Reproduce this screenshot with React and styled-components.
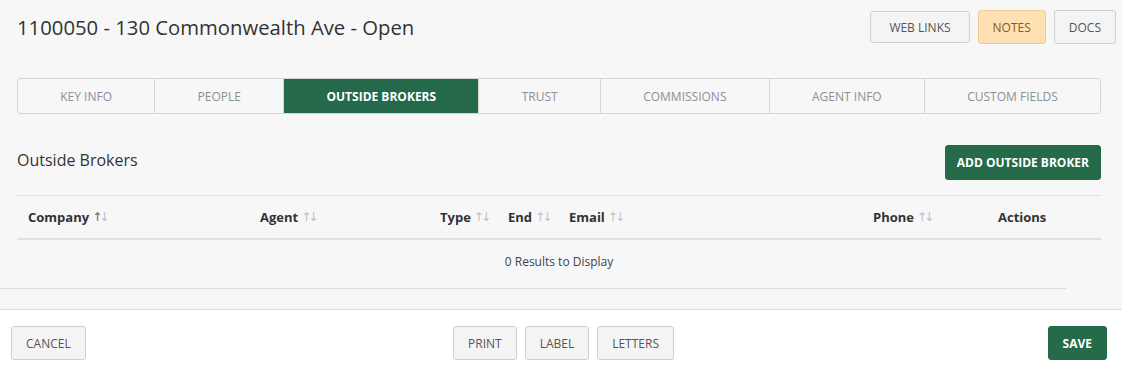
import React from 'react';
import styled, { createGlobalStyle } from 'styled-components';

const GlobalStyle = createGlobalStyle`
  body {
    margin: 0;
    background: #f7f7f7;
    font-family: "Open Sans", "Noto Sans", sans-serif;
    color: #333;
  }
`

const Page = styled.div`
  display: flex;
  flex-direction: column;
  height: 372px;
  overflow: hidden;
`

const Main = styled.div`
  flex: 1;
  padding: 10px 21px 0 17px;
`

const Header = styled.div`
  display: flex;
  align-items: center;
  justify-content: space-between;
  margin-right: -15px;
`

const Title = styled.h1`
  margin: 0;
  font-size: 20.3px;
  font-weight: 400;
  color: #333;
`

const Actions = styled.div`
  display: flex;
  gap: 8px;
  align-items: center;
`

const Button = styled.button`
  height: ${p => p.$tall ? 34 : 32}px;
  padding: 0 ${p => p.$pad || 14}px;
  font-family: inherit;
  font-size: 12px;
  text-transform: uppercase;
  border-radius: 3px;
  border: 1px solid ${p => p.$variant === 'primary' ? '#23694a' : p.$variant === 'warn' ? '#efcb93' : '#cfcfcf'};
  background: ${p => p.$variant === 'primary' ? '#256b4a' : p.$variant === 'warn' ? '#ffe0b2' : '#f4f4f4'};
  color: ${p => p.$variant === 'primary' ? '#fff' : p.$variant === 'warn' ? '#8a5a1a' : '#555'};
  font-weight: ${p => p.$variant === 'primary' ? 700 : 400};
  cursor: pointer;
`

const Tabs = styled.div`
  display: flex;
  margin-top: 34px;
  height: 36px;
  border: 1px solid #d6d6d6;
  border-radius: 3px;
  overflow: hidden;
  box-sizing: border-box;
`

const Tab = styled.div`
  flex: 1 1 auto;
  display: flex;
  align-items: center;
  justify-content: center;
  font-size: 12px;
  text-transform: uppercase;
  color: ${p => p.$active ? '#fff' : '#8b9096'};
  font-weight: ${p => p.$active ? 700 : 400};
  background: ${p => p.$active ? '#23694a' : 'transparent'};
  & + & {
    border-left: 1px solid #d6d6d6;
  }
`

const SectionHead = styled.div`
  display: flex;
  justify-content: space-between;
  align-items: flex-start;
  margin-top: 31px;
`

const SectionTitle = styled.h2`
  margin: 4px 0 0;
  font-size: 16px;
  font-weight: 400;
  color: #333;
`

const Table = styled.div`
  margin-top: 15px;
  border-top: 1px solid #e2e2e2;
`

const HeadRow = styled.div`
  display: grid;
  grid-template-columns: 232px 180px 68px 61px 304px 125px 1fr;
  height: 42px;
  align-items: center;
  padding-left: 11px;
  border-bottom: 2px solid #dee1e6;
`

const HeadCell = styled.div`
  font-size: 13px;
  font-weight: 700;
  color: #333;
  display: flex;
  align-items: center;
  gap: 3px;
`

const SortIcon = styled.span`
  font-family: "DejaVu Sans", sans-serif;
  font-size: 12px;
  font-weight: 400;
  letter-spacing: -3px;
  color: #bcc0c6;
  span:first-child {
    color: ${p => p.$active ? '#666' : '#bcc0c6'};
  }
`

const EmptyRow = styled.div`
  height: 42px;
  display: flex;
  align-items: center;
  justify-content: center;
  background: #f6f7f9;
  font-size: 12px;
  color: #444;
`

const Divider = styled.div`
  width: 1066px;
  margin-top: 6px;
  margin-left: -17px;
  border-top: 1px solid #dcdcdc;
`

const Footer = styled.div`
  display: grid;
  grid-template-columns: 1fr auto 1fr;
  align-items: center;
  padding: 16px 15px 12px 11px;
  background: #fff;
  border-top: 1px solid #dcdcdc;
`

const Group = styled.div`
  display: flex;
  gap: 8px;
  justify-content: ${p => p.$align || 'flex-start'};
  margin-left: ${p => p.$shift || 0}px;
`

const tabs = ['Key Info', 'People', 'Outside Brokers', 'Trust', 'Commissions', 'Agent Info', 'Custom Fields'];

const columns = [
  { label: 'Company', sort: true, active: true },
  { label: 'Agent', sort: true },
  { label: 'Type', sort: true },
  { label: 'End', sort: true },
  { label: 'Email', sort: true },
  { label: 'Phone', sort: true },
  { label: 'Actions' },
];

const App = () => (
  <>
    <GlobalStyle />
    <Page>
      <Main>
        <Header>
          <Title>1100050 - 130 Commonwealth Ave - Open</Title>
          <Actions>
            <Button $pad={18}>Web Links</Button>
            <Button $tall $variant="warn" $pad={14}>Notes</Button>
            <Button $tall $pad={14}>Docs</Button>
          </Actions>
        </Header>
        <Tabs>
          {tabs.map(t => (
            <Tab key={t} $active={t === 'Outside Brokers'}>{t}</Tab>
          ))}
        </Tabs>
        <SectionHead>
          <SectionTitle>Outside Brokers</SectionTitle>
          <Button $tall $variant="primary" $pad={11} style={{ height: 35 }}>Add Outside Broker</Button>
        </SectionHead>
        <Table>
          <HeadRow>
            {columns.map(c => (
              <HeadCell key={c.label}>
                {c.label}
                {c.sort && (
                  <SortIcon $active={c.active}><span>↑</span><span>↓</span></SortIcon>
                )}
              </HeadCell>
            ))}
          </HeadRow>
          <EmptyRow>0 Results to Display</EmptyRow>
        </Table>
        <Divider />
      </Main>
      <Footer>
        <Group>
          <Button $tall $pad={14}>Cancel</Button>
        </Group>
        <Group $shift={9}>
          <Button $tall $pad={14}>Print</Button>
          <Button $tall $pad={14}>Label</Button>
          <Button $tall $pad={14}>Letters</Button>
        </Group>
        <Group $align="flex-end">
          <Button $tall $variant="primary" $pad={14}>Save</Button>
        </Group>
      </Footer>
    </Page>
  </>
)

export default App;
